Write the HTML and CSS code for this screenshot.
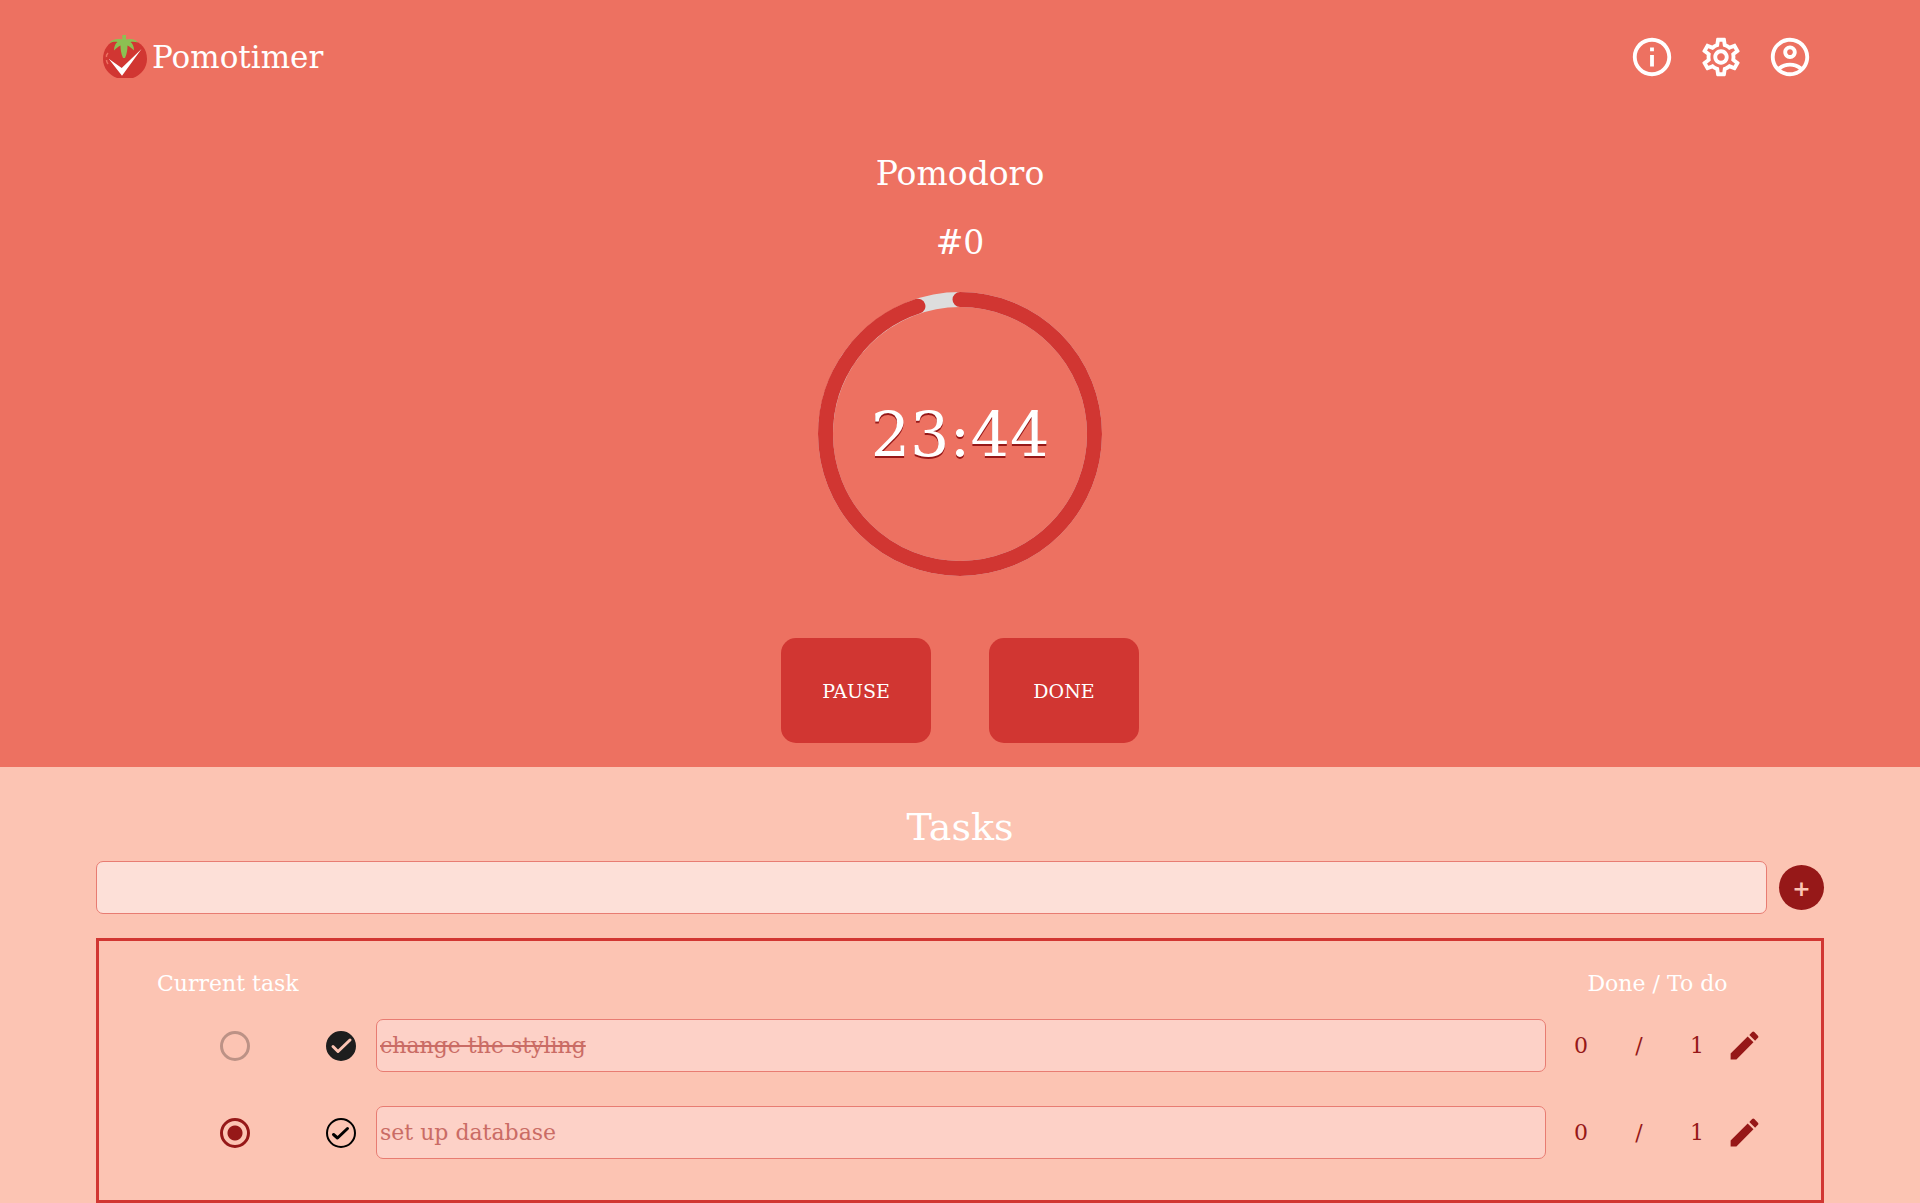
FILE: index.html
```html
<!DOCTYPE html>
<html lang="en">
<head>
<meta charset="utf-8">
<meta name="viewport" content="width=device-width, initial-scale=1">
<title>Pomotimer</title>
<link rel="stylesheet" href="styles.css">
</head>
<body>
<div class="hero">
  <header class="header">
    <a class="brand" href="#">
      <svg class="brand-logo" viewBox="0 0 44 44" aria-hidden="true">
        <path d="M14 5C5 7 0 15 0 24c0 9 6 16 14 19h16c8-3 14-10 14-19 0-10-6-17-15-19z" fill="#d13632"/>
        <path d="M5 18q-2 2-1.500 4M3.500 25q0 2 1.500 4" fill="none" stroke="#ed7161" stroke-width="1.500"/>
        <path d="M19.300 0h3.700v4.500c4-1 9-1 12 3-3-1-6-1-7.500-.5 2 1.500 3.500 4 3.500 8.500-2-2-4-4-6.500-5 0 4-.5 8-2.500 12.500h-2c-2-4.500-2.500-8.500-2.500-12.500-2.500 1-4.500 3-6.500 5 0-4.500 1.500-7 3.500-8.500-2-.5-5-.5-8 1 2.500-4 8-4.500 12.800-3.500z" fill="#8cc152"/>
        <path d="M5.700 23.700L18.700 33 38.500 14 19 40.800z" fill="#fff"/>
      </svg>
      <span>Pomotimer</span>
    </a>
    <nav class="actions" aria-label="Main">
      <button class="icon-button" type="button" aria-label="About">
        <svg viewBox="0 0 24 24"><path d="M11 7h2v2h-2zm0 4h2v6h-2zm1-9C6.480 2 2 6.480 2 12s4.480 10 10 10 10-4.480 10-10S17.520 2 12 2zm0 18c-4.410 0-8-3.590-8-8s3.590-8 8-8 8 3.590 8 8-3.590 8-8 8z"/></svg>
      </button>
      <button class="icon-button" type="button" aria-label="Settings">
        <svg viewBox="0 0 24 24"><path d="M19.430 12.980c.04-.32.07-.64.07-.98 0-.34-.03-.66-.07-.98l2.110-1.650c.19-.15.24-.42.12-.64l-2-3.460c-.09-.16-.26-.25-.44-.25-.06 0-.12.01-.17.03l-2.490 1c-.52-.4-1.080-.73-1.690-.98l-.38-2.650C14.460 2.180 14.250 2 14 2h-4c-.25 0-.46.18-.49.42l-.38 2.650c-.61.25-1.170.59-1.690.98l-2.490-1c-.06-.02-.12-.03-.18-.03-.17 0-.34.09-.43.25l-2 3.460c-.13.22-.07.49.12.64l2.110 1.650c-.04.32-.07.65-.07.98 0 .33.03.66.07.98l-2.110 1.650c-.19.15-.24.42-.12.64l2 3.460c.09.16.26.25.44.25.06 0 .12-.01.17-.03l2.490-1c.52.4 1.080.73 1.690.98l.38 2.650c.03.24.24.42.49.42h4c.25 0 .46-.18.49-.42l.38-2.650c.61-.25 1.170-.59 1.690-.98l2.490 1c.06.02.12.03.18.03.17 0 .34-.09.43-.25l2-3.460c.12-.22.07-.49-.12-.64l-2.110-1.650zm-1.980-1.710c.04.31.05.52.05.73 0 .21-.02.43-.05.73l-.14 1.130.89.7 1.080.84-.7 1.210-1.270-.51-1.040-.42-.9.68c-.43.32-.84.56-1.250.73l-1.060.43-.16 1.130-.2 1.350h-1.400l-.19-1.350-.16-1.130-1.060-.43c-.43-.18-.83-.41-1.230-.71l-.91-.7-1.060.43-1.270.51-.7-1.210 1.080-.84.89-.7-.14-1.130c-.03-.31-.05-.54-.05-.74s.02-.43.05-.73l.14-1.130-.89-.7-1.080-.84.7-1.210 1.270.51 1.040.42.9-.68c.43-.32.84-.56 1.250-.73l1.060-.43.16-1.130.2-1.350h1.390l.19 1.350.16 1.130 1.060.43c.43.18.83.41 1.230.71l.91.7 1.060-.43 1.270-.51.7 1.210-1.070.85-.89.7.14 1.130zM12 8c-2.210 0-4 1.790-4 4s1.790 4 4 4 4-1.790 4-4-1.790-4-4-4zm0 6c-1.100 0-2-.9-2-2s.9-2 2-2 2 .9 2 2-.9 2-2 2z"/></svg>
      </button>
      <button class="icon-button" type="button" aria-label="Account">
        <svg viewBox="0 0 24 24"><path d="M12 2C6.480 2 2 6.480 2 12s4.480 10 10 10 10-4.480 10-10S17.520 2 12 2zM7.350 18.500C8.660 17.560 10.260 17 12 17s3.340.56 4.650 1.500C15.340 19.440 13.740 20 12 20s-3.340-.56-4.650-1.500zm10.790-1.380C16.450 15.800 14.320 15 12 15s-4.450.8-6.140 2.120C4.700 15.730 4 13.950 4 12c0-4.420 3.580-8 8-8s8 3.580 8 8c0 1.950-.7 3.730-1.860 5.120zM12 6c-1.930 0-3.500 1.570-3.500 3.500S10.070 13 12 13s3.500-1.570 3.500-3.500S13.930 6 12 6zm0 5c-.83 0-1.500-.67-1.500-1.500S11.170 8 12 8s1.500.67 1.500 1.500S12.830 11 12 11z"/></svg>
      </button>
    </nav>
  </header>

  <main class="timer">
    <h1 class="timer-title">Pomodoro</h1>
    <p class="timer-title">#0</p>
    <div class="dial">
      <svg class="dial-ring" viewBox="0 0 284 284" aria-hidden="true">
        <circle class="dial-track" cx="142" cy="142" r="134.500"/>
        <circle class="dial-progress" cx="142" cy="142" r="134.500" pathLength="1500" stroke-dasharray="1424 1500" transform="rotate(-90 142 142)"/>
      </svg>
      <time class="dial-time">23:44</time>
    </div>
    <div class="controls">
      <button class="control" type="button">PAUSE</button>
      <button class="control" type="button">DONE</button>
    </div>
  </main>
</div>

<section class="tasks">
  <h2 class="tasks-title">Tasks</h2>
  <form class="new-task">
    <input class="field field-new" type="text" aria-label="New task">
    <button class="add" type="button" aria-label="Add task">+</button>
  </form>
  <div class="task-panel">
    <table class="task-table">
      <colgroup>
        <col class="col-current"><col class="col-check"><col>
        <col class="col-count"><col class="col-count"><col class="col-count"><col class="col-edit">
      </colgroup>
      <thead>
        <tr>
          <th class="head-current" colspan="3" scope="col">Current task</th>
          <th colspan="4" scope="col">Done / To do</th>
        </tr>
      </thead>
      <tbody>
        <tr>
          <td><input class="radio" type="radio" name="current" aria-label="Work on change the styling" disabled></td>
          <td><label class="check"><input class="check-box" type="checkbox" aria-label="Completed" checked><svg class="check-tick" viewBox="0 0 30 30"><path d="M7 15.500l5 5L24 9"/></svg></label></td>
          <td class="cell-name"><input class="field field-done" type="text" aria-label="Task name" value="change the styling"></td>
          <td>0</td><td>/</td><td>1</td>
          <td><button class="edit" type="button" aria-label="Edit"><svg viewBox="0 0 24 24"><path d="M3 17.250V21h3.750L17.810 9.940l-3.750-3.750L3 17.250zM20.710 7.040c.39-.39.39-1.020 0-1.410l-2.340-2.340a.996.996 0 0 0-1.410 0l-1.830 1.830 3.750 3.750 1.830-1.830z"/></svg></button></td>
        </tr>
        <tr>
          <td><input class="radio" type="radio" name="current" aria-label="Work on set up database" checked></td>
          <td><label class="check"><input class="check-box" type="checkbox" aria-label="Completed"><svg class="check-tick" viewBox="0 0 30 30"><path d="M7.500 16.500l4 3.500L21.500 10.500"/></svg></label></td>
          <td class="cell-name"><input class="field" type="text" aria-label="Task name" value="set up database"></td>
          <td>0</td><td>/</td><td>1</td>
          <td><button class="edit" type="button" aria-label="Edit"><svg viewBox="0 0 24 24"><path d="M3 17.250V21h3.750L17.810 9.940l-3.750-3.750L3 17.250zM20.710 7.040c.39-.39.39-1.020 0-1.410l-2.340-2.340a.996.996 0 0 0-1.410 0l-1.830 1.830 3.750 3.750 1.830-1.830z"/></svg></button></td>
        </tr>
      </tbody>
    </table>
  </div>
</section>
</body>
</html>
```
FILE: styles.css
```css
:root {
  --coral: #ed7161;
  --peach: #fcc4b3;
  --red: #d13632;
  --wine: #961818;
}

* {
  box-sizing: border-box;
}

body {
  margin: 0;
  background: var(--peach);
  color: #fff;
  font-family: "DejaVu Serif", serif;
  font-size: 22px;
}

h1, h2, p {
  margin: 0;
  font-weight: 400;
}

button, input {
  margin: 0;
  font: inherit;
}

button {
  padding: 0;
  border: 0;
  background: none;
  cursor: pointer;
}

svg {
  display: block;
}

.hero {
  padding: 0 5% 24px;
  background: var(--coral);
}

.header {
  display: flex;
  align-items: center;
  justify-content: space-between;
  padding: 34px 11px 34px 7px;
}

.brand {
  display: flex;
  align-items: center;
  gap: 5px;
  color: #fff;
  font-size: 31px;
  line-height: 40px;
  text-decoration: none;
}

.brand-logo {
  width: 44px;
  height: 44px;
}

.actions {
  display: flex;
  gap: 23px;
}

.icon-button svg {
  width: 46px;
  height: 46px;
  fill: #fff;
}

.timer {
  display: flex;
  flex-direction: column;
  align-items: center;
  gap: 29px;
  padding-top: 40px;
}

.timer-title {
  font-size: 33px;
  line-height: 40px;
}

.dial {
  display: grid;
  place-items: center;
}

.dial-ring,
.dial-time {
  grid-area: 1 / 1;
}

.dial-ring {
  width: 284px;
  height: 284px;
}

.dial-ring circle {
  fill: none;
  stroke-width: 15;
}

.dial-track {
  stroke: #ddd;
}

.dial-progress {
  stroke: var(--red);
  stroke-linecap: round;
}

.dial-time {
  font-size: 62px;
  text-shadow: 0 2px var(--wine);
}

.controls {
  display: flex;
  gap: 58px;
  padding-top: 33px;
}

.control {
  width: 150px;
  height: 105px;
  border-radius: 15px;
  background: var(--red);
  color: #fff;
  font-size: 19px;
}

.tasks {
  padding: 38px 5% 0;
}

.tasks-title {
  margin-bottom: 12px;
  font-size: 38px;
  line-height: 44px;
  text-align: center;
}

.new-task {
  display: flex;
  align-items: center;
  gap: 12px;
  margin-bottom: 24px;
}

.field {
  display: block;
  width: 100%;
  height: 53px;
  padding: 0 3px;
  border: 1px solid #e87c72;
  border-radius: 7px;
  outline: 0;
  background: #fdd1c7;
  color: #ca6c65;
}

.field-new {
  flex: 1;
  background: #fde0d8;
}

.field-done {
  text-decoration: line-through;
}

.add {
  width: 45px;
  height: 45px;
  padding-top: 2px;
  border-radius: 50%;
  background: var(--wine);
  color: var(--peach);
  font-family: "DejaVu Sans", sans-serif;
  font-weight: 700;
}

.task-panel {
  padding: 24px 58px;
  border: 3px solid var(--red);
}

.task-table {
  width: 100%;
  border-collapse: collapse;
  table-layout: fixed;
  color: var(--wine);
}

/* The header cells span columns, so the widths come from the colgroup. */
.col-current {
  width: 155px;
}

.col-check {
  width: 58px;
}

.col-count {
  width: 58px;
}

.col-edit {
  width: 37px;
}

.task-table th {
  height: 37px;
  padding: 0;
  color: #fff;
  font-weight: 400;
}

.task-table .head-current {
  text-align: left;
}

.task-table td {
  height: 87px;
  padding: 0;
  text-align: center;
}

.task-table .cell-name {
  padding: 0 6px;
}

.radio {
  display: block;
  width: 30px;
  height: 30px;
  margin: 0 auto;
  appearance: none;
  border: 3px solid var(--wine);
  border-radius: 50%;
}

.radio:checked {
  background: radial-gradient(circle, var(--wine) 7px, transparent 8px);
}

.radio:disabled {
  border-color: #bc9286;
}

.check {
  display: grid;
  place-items: center;
}

.check-box,
.check-tick {
  grid-area: 1 / 1;
  width: 30px;
  height: 30px;
}

.check-box {
  appearance: none;
  border: 2px solid #000;
  border-radius: 50%;
}

.check-box:checked {
  border-color: #1e1e1e;
  background: #1e1e1e;
}

.check-tick {
  fill: none;
  stroke: #000;
  stroke-width: 3;
  stroke-linecap: round;
  stroke-linejoin: round;
  pointer-events: none;
}

.check-box:checked + .check-tick {
  stroke: var(--peach);
}

.edit {
  display: block;
}

.edit svg {
  width: 37px;
  height: 37px;
  fill: var(--wine);
}
```
